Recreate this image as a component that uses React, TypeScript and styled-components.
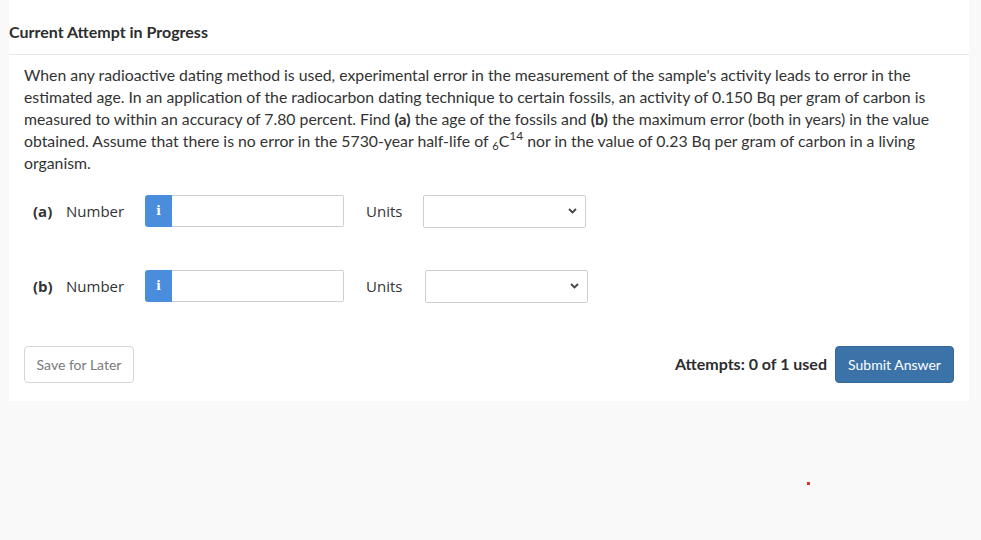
import React from "react";
import styled, { createGlobalStyle } from "styled-components";

const Global = createGlobalStyle`
  html, body { margin: 0; padding: 0; background: #f9f9f9; }
  body { font-family: Lato, "Open Sans", sans-serif; color: #333; }
  * { box-sizing: border-box; }
`;

const Page = styled.div`
  position: relative;
  width: 981px;
  height: 540px;
  padding-left: 9px;
`;

const Card = styled.div`
  width: 960px;
  background: #fff;
  padding-bottom: 18px;
`;

const Header = styled.div`
  height: 55px;
  padding-top: 22px;
  border-bottom: 1px solid #e8e8e8;
  font-size: 16px;
  font-weight: 700;
  line-height: 20px;
  color: #2d2d2d;
`;

const Body = styled.div`
  padding: 9px 15px 0 15px;
`;

const Question = styled.p`
  margin: 0;
  width: 910px;
  font-size: 15.8px;
  line-height: 22px;
  color: #333;
  sub { font-size: 11px; vertical-align: -3px; line-height: 0; }
  sup { font-size: 12px; vertical-align: 7px; line-height: 0; }
`;

const Rows = styled.div`
  display: flex;
  flex-direction: column;
  gap: 43px;
  margin-top: 21px;
  padding-left: 9px;
`;

const Row = styled.div`
  display: flex;
  align-items: center;
  height: 32px;
  font-family: "Open Sans", sans-serif;
  font-size: 15px;
  color: #333;
`;

const Part = styled.span`
  font-weight: 700;
  width: 33px;
`;

const Label = styled.span<{ $w: number }>`
  width: ${(p) => p.$w}px;
`;

const InputGroup = styled.div`
  display: flex;
  height: 32px;
  margin-right: 22px;
`;

const InfoBtn = styled.div`
  width: 27px;
  height: 32px;
  background: #4a8ddc;
  border-radius: 3px 0 0 3px;
  color: #fff;
  font-family: "DejaVu Serif", serif;
  font-weight: 700;
  font-size: 12px;
  display: flex;
  align-items: center;
  justify-content: center;
`;

const NumInput = styled.input`
  width: 172px;
  height: 32px;
  border: 1px solid #cfcfcf;
  border-left: none;
  border-radius: 0 2px 2px 0;
  outline: none;
  padding: 0 8px;
  font-size: 14px;
`;

const SelectWrap = styled.div<{ $ml: number }>`
  position: relative;
  width: 163px;
  height: 33px;
  margin-left: ${(p) => p.$ml}px;
`;

const Select = styled.select`
  appearance: none;
  -webkit-appearance: none;
  width: 163px;
  height: 33px;
  border: 1px solid #cfcfcf;
  border-radius: 2px;
  background: #fff;
  font-size: 14px;
`;

const Chevron = styled.svg`
  position: absolute;
  right: 9px;
  top: 13px;
  pointer-events: none;
`;

const Footer = styled.div`
  display: flex;
  align-items: center;
  margin-top: 44px;
`;

const SaveBtn = styled.button`
  height: 37px;
  width: 110px;
  border: 1px solid #d6d6d6;
  border-radius: 4px;
  background: #fff;
  color: #7a7a7a;
  font-family: Lato, sans-serif;
  font-size: 14px;
  padding: 0;
`;

const Spacer = styled.div`
  flex: 1;
`;

const Attempts = styled.span`
  font-size: 16px;
  font-weight: 700;
  color: #2d2d2d;
  margin-right: 8px;
  position: relative;
  top: -1px;
`;

const SubmitBtn = styled.button`
  height: 37px;
  width: 119px;
  border: 1px solid #35689a;
  border-radius: 4px;
  background: #3b73a8;
  color: #fff;
  font-family: Lato, sans-serif;
  font-size: 14px;
  padding: 0;
`;

const Dot = styled.div`
  position: absolute;
  left: 807px;
  top: 482px;
  width: 3px;
  height: 3px;
  background: #e0301e;
`;

const AnswerRow = ({ part, unitsMl }: { part: string; unitsMl: number }) => (
  <Row>
    <Part>({part})</Part>
    <Label $w={79}>Number</Label>
    <InputGroup>
      <InfoBtn>i</InfoBtn>
      <NumInput type="text" />
    </InputGroup>
    <Label $w={37}>Units</Label>
    <SelectWrap $ml={unitsMl}>
      <Select>
        <option></option>
      </Select>
      <Chevron width="9" height="6" viewBox="0 0 9 6">
        <path d="M1 1 L4.5 4.5 L8 1" fill="none" stroke="#444" strokeWidth="1.8" />
      </Chevron>
    </SelectWrap>
  </Row>
);

export default function App() {
  return (
    <>
      <Global />
      <Page>
        <Card>
          <Header>Current Attempt in Progress</Header>
          <Body>
            <Question>
              When any radioactive dating method is used, experimental error in the measurement of the sample's activity leads to error in the estimated age. In an application of the radiocarbon dating technique to certain fossils, an activity of 0.150 Bq per gram of carbon is measured to within an accuracy of 7.80 percent. Find <b>(a)</b> the age of the fossils and <b>(b)</b> the maximum error (both in years) in the value obtained. Assume that there is no error in the 5730-year half-life of <sub>6</sub>C<sup>14</sup> nor in the value of 0.23 Bq per gram of carbon in a living organism.
            </Question>
            <Rows>
              <AnswerRow part="a" unitsMl={20} />
              <AnswerRow part="b" unitsMl={22} />
            </Rows>
            <Footer>
              <SaveBtn>Save for Later</SaveBtn>
              <Spacer />
              <Attempts>Attempts: 0 of 1 used</Attempts>
              <SubmitBtn>Submit Answer</SubmitBtn>
            </Footer>
          </Body>
        </Card>
        <Dot />
      </Page>
    </>
  );
}
